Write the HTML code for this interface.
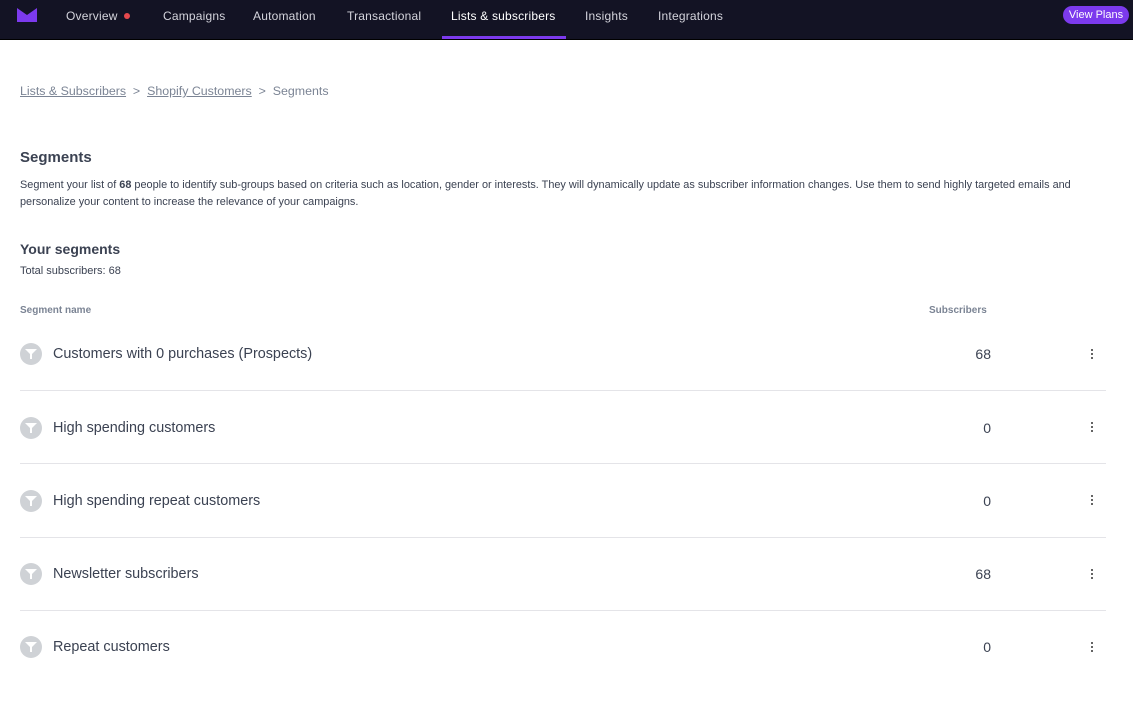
<!DOCTYPE html>
<html><head><style>
body{margin:0;width:1133px;height:707px;background:#fff;font-family:"Liberation Sans",sans-serif;color:#3b4252;overflow:hidden;position:relative}
.nav{position:absolute;left:0;top:0;width:1133px;height:39px;background:#131324;border-bottom:1px solid #000}
.nav a{position:absolute;top:9px;font-size:12px;color:#d4d4dc;letter-spacing:.2px}
.ul{position:absolute;left:442px;top:36px;width:124px;height:3px;background:#7c3aed}
.vp{position:absolute;left:1063px;top:6px;width:66px;height:18px;border-radius:9px;background:#7c3aed;color:#fff;font-size:11px;line-height:18px;text-align:center}
.t{position:absolute;white-space:nowrap}
.row{position:absolute;left:20px;width:1086px;height:1px;background:#e4e4e8}
.ic{position:absolute;left:20px;width:22px;height:22px;border-radius:50%;background:#cfd2d6}
.ic:after{content:"";position:absolute;left:5px;top:6px;border-left:6px solid transparent;border-right:6px solid transparent;border-top:6px solid #fff}
.ic:before{content:"";position:absolute;left:10px;top:11px;width:2px;height:5px;background:#fff}
.name{position:absolute;left:53px;font-size:14.4px;color:#3b4252}
.num{position:absolute;right:142px;font-size:14px;color:#3b4252}
.dots{position:absolute;left:1091px;width:3px;font-size:0}
.dots i{display:block;width:2px;height:2px;background:#333;border-radius:1px;margin-bottom:2px}
</style></head><body>
<div class="nav">
<svg style="position:absolute;left:17px;top:8px" width="20" height="14"><path d="M0 0 L10 7 L20 0 L20 14 L0 14 Z" fill="#7c3aed"/></svg>
<a style="left:66px">Overview</a><span style="position:absolute;left:124px;top:13px;width:6px;height:6px;border-radius:3px;background:#e5484d"></span>
<a style="left:163px">Campaigns</a><a style="left:253px">Automation</a><a style="left:347px">Transactional</a><a style="left:451px;color:#fff">Lists &amp; subscribers</a><a style="left:585px">Insights</a><a style="left:658px">Integrations</a>
<div class="ul"></div><div class="vp">View Plans</div></div>
<div class="t" style="left:20px;top:84px;font-size:12.4px;color:#7b8494"><u>Lists &amp; Subscribers</u> &nbsp;&gt;&nbsp; <u>Shopify Customers</u> &nbsp;&gt;&nbsp; Segments</div>
<div class="t" style="left:20px;top:149px;font-size:15px;font-weight:bold">Segments</div>
<div class="t" style="left:20px;top:177px;font-size:10.9px;line-height:17px;white-space:normal;width:1080px">Segment your list of <b>68</b> people to identify sub-groups based on criteria such as location, gender or interests. They will dynamically update as subscriber information changes. Use them to send highly targeted emails and personalize your content to increase the relevance of your campaigns.</div>
<div class="t" style="left:20px;top:241px;font-size:14px;font-weight:bold">Your segments</div>
<div class="t" style="left:20px;top:265px;font-size:11px">Total subscribers: 68</div>
<div class="t" style="left:20px;top:305px;font-size:10px;font-weight:bold;color:#7b8494">Segment name</div>
<div class="t" style="left:929px;top:305px;font-size:10px;font-weight:bold;color:#7b8494">Subscribers</div>

<div class="ic" style="top:343px"></div><div class="name" style="top:346px">Customers with 0 purchases (Prospects)</div><div class="num" style="top:346px">68</div><div class="dots" style="top:349px"><i></i><i></i><i></i></div>
<div class="row" style="top:390px"></div>
<div class="ic" style="top:417px"></div><div class="name" style="top:420px">High spending customers</div><div class="num" style="top:420px">0</div><div class="dots" style="top:422px"><i></i><i></i><i></i></div>
<div class="row" style="top:463px"></div>
<div class="ic" style="top:490px"></div><div class="name" style="top:493px">High spending repeat customers</div><div class="num" style="top:493px">0</div><div class="dots" style="top:495px"><i></i><i></i><i></i></div>
<div class="row" style="top:537px"></div>
<div class="ic" style="top:563px"></div><div class="name" style="top:566px">Newsletter subscribers</div><div class="num" style="top:566px">68</div><div class="dots" style="top:569px"><i></i><i></i><i></i></div>
<div class="row" style="top:610px"></div>
<div class="ic" style="top:636px"></div><div class="name" style="top:639px">Repeat customers</div><div class="num" style="top:639px">0</div><div class="dots" style="top:642px"><i></i><i></i><i></i></div>
</body></html>
